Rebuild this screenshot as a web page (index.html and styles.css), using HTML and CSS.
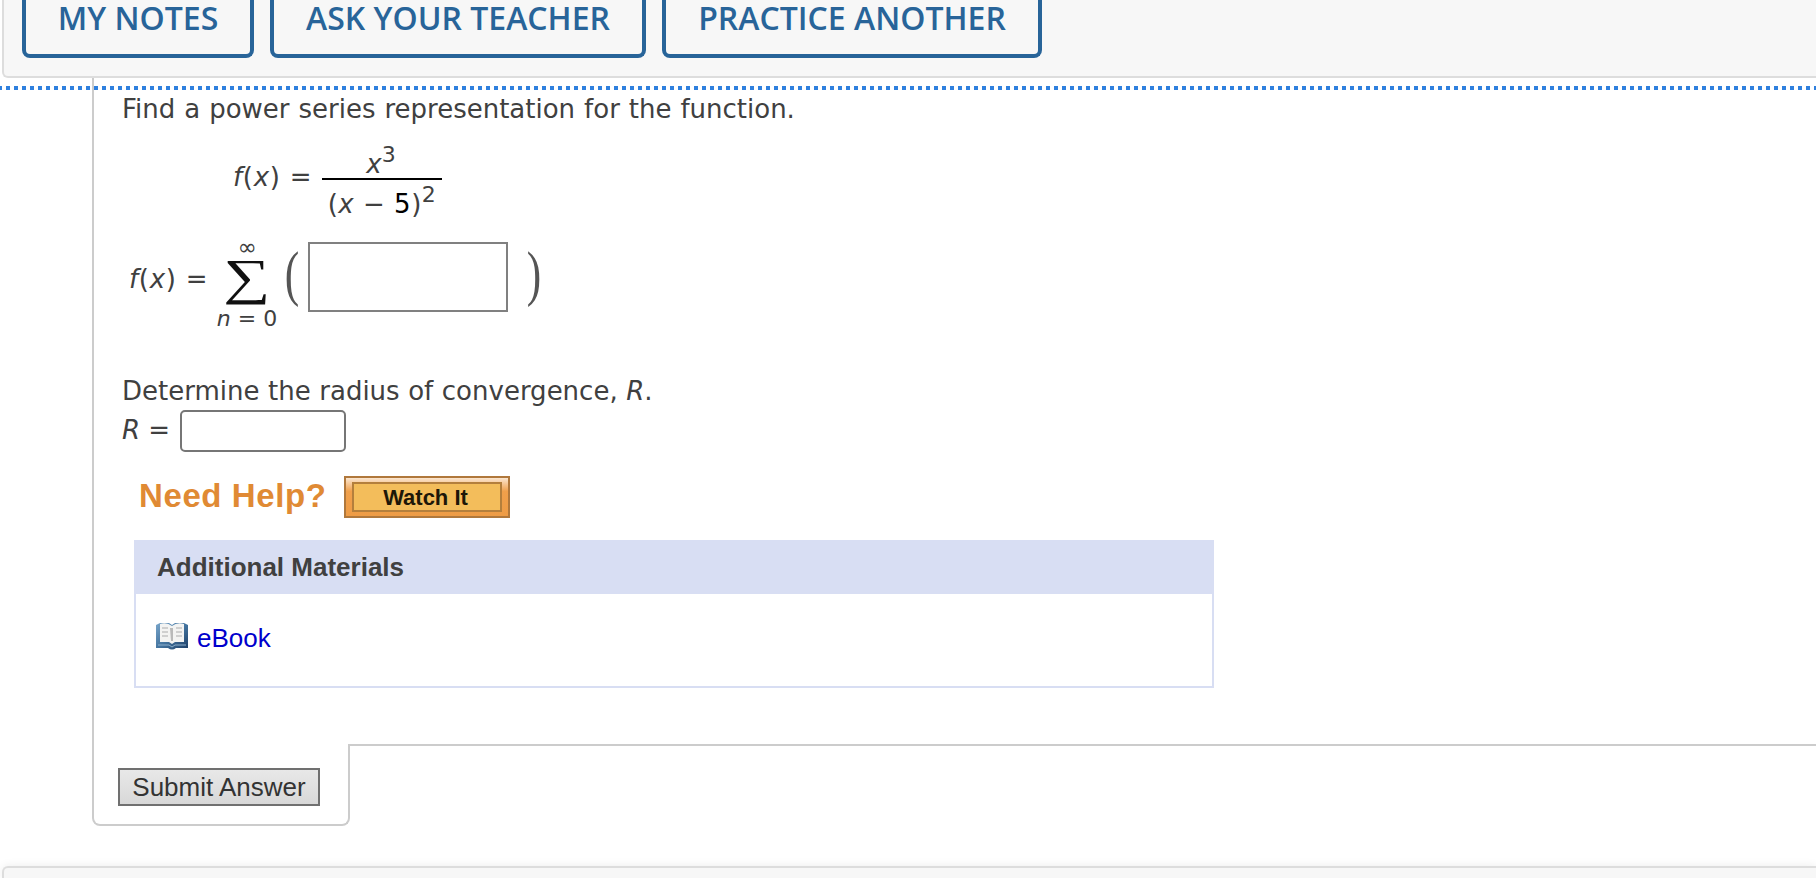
FILE: index.html
```
<!DOCTYPE html>
<html lang="en">
<head>
    <meta charset="utf-8">
    <title>Power Series</title>
    <link rel="stylesheet" href="styles.css">
</head>
<body>

<div class="header">
    <button class="nav-btn notes">MY NOTES</button>
    <button class="nav-btn ask">ASK YOUR TEACHER</button>
    <button class="nav-btn practice">PRACTICE ANOTHER</button>
</div>
<div class="dots"></div>

<div class="question">
    <p class="text find">Find a power series representation for the function.</p>

    <div class="formula">
        <span class="fx"><i>f</i>(<i>x</i>) =</span>
        <div class="fraction">
            <div class="top"><i>x</i><sup>3</sup></div>
            <div class="bottom">(<i>x</i> − <b>5</b>)<sup>2</sup></div>
        </div>
    </div>

    <div class="series">
        <span class="fx"><i>f</i>(<i>x</i>) =</span>
        <div class="sum">
            <span class="limit upper">∞</span>
            <span class="sigma">∑</span>
            <span class="limit lower"><i>n</i> = 0</span>
        </div>
        <span class="paren">(</span>
        <div class="answer-box"></div>
        <span class="paren right">)</span>
    </div>

    <p class="text determine">Determine the radius of convergence, <i>R</i>.</p>
    <div class="radius">
        <label for="radius"><i>R</i> =</label>
        <input type="text" id="radius">
    </div>

    <div class="help">
        <span class="need">Need Help?</span>
        <button class="watch"><span>Watch It</span></button>
    </div>

    <div class="materials">
        <h3>Additional Materials</h3>
        <div class="materials-body">
            <svg width="32" height="30" viewBox="0 0 32 30">
                <defs>
                    <linearGradient id="cover" x1="0" y1="0" x2="1" y2="1">
                        <stop offset="0" stop-color="#78a5ca"/>
                        <stop offset="0.5" stop-color="#44749f"/>
                        <stop offset="1" stop-color="#1c3d66"/>
                    </linearGradient>
                </defs>
                <path d="M0 4L4 2H13L16 4L19 2H28L32 4V27H20Q16 30 12 27H0Z" fill="url(#cover)"/>
                <path d="M2 24H13L16 26L19 24H30" fill="none" stroke="#8eb0cb" stroke-width="1"/>
                <path d="M4 3Q11 1 16 5Q21 1 28 3V21H19L16 23L13 21H4Z" fill="#f3f3f2"/>
                <path d="M14 7H17V20H15Z" fill="#b9b9b9"/>
                <path d="M6 7H12M6 11H12M6 15H12M20 7H26M20 11H26M20 15H26" stroke="#c4c4c4" stroke-width="1.5"/>
            </svg>
            <a href="#">eBook</a>
        </div>
    </div>
</div>

<div class="foot">
    <div class="tab">
        <button class="submit">Submit Answer</button>
    </div>
    <div class="rule"></div>
</div>

<div class="next"></div>

</body>
</html>
```

FILE: styles.css
```
* {
    box-sizing: border-box;
}

body {
    margin: 0;
    height: 878px;
    overflow: hidden;
    background: #fff;
    color: #404040;
    font-family: Verdana, "DejaVu Sans", sans-serif;
    font-size: 26px;
    line-height: 30px;
}

.header {
    display: flex;
    gap: 16px;
    height: 78px;
    margin-left: 2px;
    padding-left: 18px;
    background: #f7f7f7;
    border-left: 2px solid #ddd;
    border-bottom: 2px solid #ddd;
    border-bottom-left-radius: 6px;
}

.nav-btn {
    height: 58px;
    padding: 0 0 18px;
    background: none;
    border: 4px solid #286499;
    border-top: none;
    border-radius: 0 0 8px 8px;
    color: #286499;
    font: 600 32px/36px "Open Sans", sans-serif;
    white-space: nowrap;
}

.notes {
    width: 232px;
}

.ask {
    width: 376px;
}

.practice {
    width: 380px;
}

.dots {
    position: absolute;
    top: 86px;
    left: -2px;
    right: 0;
    height: 4px;
    background: repeating-linear-gradient(90deg, #2f80de 0 4px, transparent 4px 8px);
}

.question {
    height: 666px;
    margin-left: 92px;
    padding: 16px 0 0 28px;
    border-left: 2px solid #ccc;
}

.text {
    margin: 0;
    white-space: nowrap;
}

.find {
    word-spacing: 0.7px;
}

.determine {
    word-spacing: 0.3px;
}

.formula {
    display: flex;
    height: 112px;
    padding: 20px 0 0 111px;
}

.fx {
    width: 89px;
    letter-spacing: 0.7px;
    word-spacing: 0.2px;
    white-space: nowrap;
}

.formula .fx {
    margin-top: 18px;
}

.fraction {
    width: 120px;
    text-align: center;
}

.fraction sup {
    font-size: 22px;
    line-height: 0;
    vertical-align: 11px;
}

.fraction b {
    color: #000;
    font-weight: normal;
}

.top {
    height: 36px;
    padding: 5px 2px 0 0;
    border-bottom: 2px solid #000;
}

.bottom {
    padding-top: 9px;
    letter-spacing: 0.5px;
    white-space: nowrap;
}

.series {
    display: flex;
    height: 140px;
    padding: 6px 0 0 7px;
}

.series .fx {
    margin-top: 22px;
}

.sum {
    display: flex;
    flex-direction: column;
    align-items: center;
    width: 58px;
}

.limit {
    font-size: 22px;
    white-space: nowrap;
}

.upper {
    height: 16px;
    line-height: 10px;
    font-size: 23px;
}

.sigma {
    height: 45px;
    color: #111;
    font: 50px/38px "Liberation Serif", serif;
    transform: scaleX(1.32);
}

.lower {
    line-height: 32px;
}

.paren {
    width: 32px;
    color: #555;
    text-align: center;
    font: 62px/62px "Liberation Serif", serif;
    transform: scaleX(0.7);
}

.answer-box {
    width: 200px;
    height: 70px;
    border: 2px solid #808080;
}

.paren.right {
    margin-left: 10px;
}

.radius {
    display: flex;
    height: 47px;
    padding-top: 4px;
}

.radius label {
    width: 58px;
    margin-top: 5px;
}

.radius input {
    width: 166px;
    height: 42px;
    border: 2px solid #767676;
    border-radius: 5px;
}

.help {
    display: flex;
    height: 87px;
    padding: 23px 0 0 17px;
}

.need {
    width: 205px;
    color: #e08a34;
    font: bold 33px/40px "Liberation Sans", sans-serif;
    letter-spacing: 0.6px;
    white-space: nowrap;
}

.watch {
    width: 166px;
    height: 42px;
    padding: 4px 6px;
    border: 2px solid #b0783c;
    background: linear-gradient(#fbe6d0, #f0a04b 35%, #ee9c46);
}

.watch span {
    display: block;
    height: 30px;
    padding-right: 3px;
    border: 2px solid #b47f3c;
    background: #f3bd5b;
    color: #1d1708;
    font: bold 22px/28px "Liberation Sans", sans-serif;
}

.materials {
    width: 1080px;
    height: 148px;
    margin-left: 12px;
    border: 2px solid #d8def3;
    font-family: Arial, "Liberation Sans", sans-serif;
}

.materials h3 {
    height: 52px;
    margin: 0;
    padding: 10px 0 0 21px;
    background: #d8def3;
    font-size: 26px;
    line-height: 30px;
}

.materials-body {
    display: flex;
    gap: 9px;
    padding: 27px 0 0 20px;
}

.materials-body a {
    margin-top: 2px;
    color: #0000cc;
    text-decoration: none;
}

.foot {
    display: flex;
    height: 122px;
}

.tab {
    width: 258px;
    height: 82px;
    margin-left: 92px;
    padding: 24px 0 0 24px;
    border: 2px solid #ccc;
    border-top: none;
    border-radius: 0 0 8px 8px;
}

.submit {
    width: 202px;
    height: 38px;
    padding: 0;
    border: 2px solid #707070;
    background: linear-gradient(#e8e8e8, #d8d8d8);
    color: #333;
    font: 26px/34px Arial, "Liberation Sans", sans-serif;
    white-space: nowrap;
}

.rule {
    flex: 1;
    border-top: 2px solid #ccc;
}

.next {
    height: 12px;
    margin-left: 2px;
    border: 2px solid #ddd;
    border-right: none;
    border-bottom: none;
    border-radius: 6px 0 0 0;
    background: #f7f7f7;
    box-shadow: 0 0 10px rgba(0, 0, 0, 0.08);
}
```
